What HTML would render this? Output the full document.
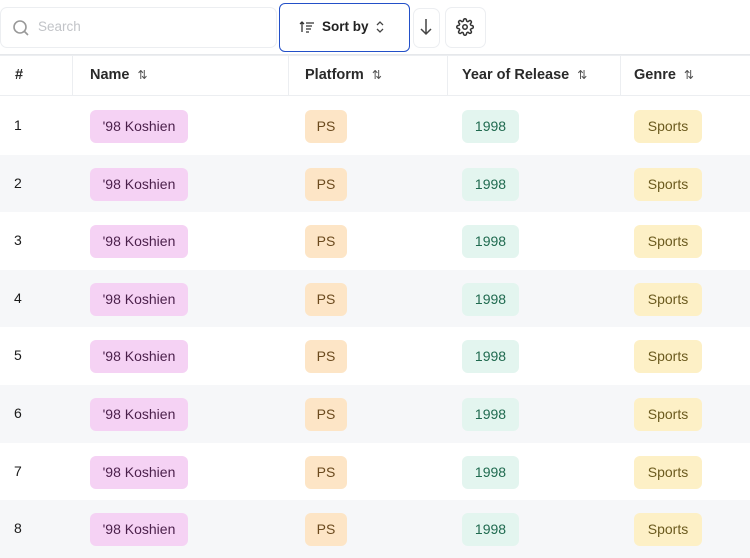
<!DOCTYPE html><html><head><style>
body{margin:0;width:750px;height:558px;overflow:hidden;background:#fff;font-family:"Liberation Sans",sans-serif;color:#1a1a1a;position:relative}
.abs{position:absolute}
.box{position:absolute;border:1px solid #eceef1;border-radius:7px;background:#fff;box-sizing:border-box}
.hdr{position:absolute;top:55px;height:41px;left:0;width:750px;border-bottom:1px solid #eceef1;border-top:1px solid #eceef1;box-sizing:border-box}
.hc{position:absolute;top:0;height:40px;line-height:38px;font-size:14.5px;font-weight:bold;color:#2a2a2a}
.sep{position:absolute;top:0;height:40px;width:1px;background:#eceef1}
.row{position:absolute;left:0;width:750px;height:57.6px}
.row.g{background:#f6f7f9}
.num{position:absolute;left:14px;top:20px;font-size:14px}
.pill{position:absolute;top:13px;height:33px;line-height:33px;border-radius:6px;font-size:14px;text-align:center}
.n{left:90px;width:98px;background:#f5d2f4;color:#4a1f4a}
.p{left:305px;width:42px;background:#fde5c6;color:#6b4a1e}
.y{left:462px;width:57px;background:#e3f5ef;color:#1f6a4f}
.s{left:634px;width:68px;background:#fdf0c6;color:#6b5a1e}
.si{font-weight:normal;color:#555;font-size:12px;margin-left:8px}
</style></head><body>
<div class="abs" style="left:0;top:54px;width:750px;height:1px;background:#e6e8eb"></div>
<div class="box" style="left:0;top:7px;width:277px;height:41px"></div>
<svg class="abs" style="left:12px;top:19px" width="18" height="18" viewBox="0 0 18 18"><circle cx="8" cy="8" r="6" fill="none" stroke="#999" stroke-width="1.6"/><path d="M12.5 12.5L16 16" stroke="#999" stroke-width="1.6"/></svg>
<div class="abs" style="left:38px;top:19px;font-size:13.5px;color:#c2c4c8">Search</div>
<div class="abs" style="left:279px;top:3px;width:131px;height:49px;border:1.5px solid #2350c8;border-radius:6px;box-sizing:border-box"></div>
<svg class="abs" style="left:299px;top:20px" width="16" height="14" viewBox="0 0 16 14"><path d="M3 12V2M1 4l2-2 2 2M7 3h8M7 6h6M7 9h5M7 12h3" stroke="#333" stroke-width="1.3" fill="none"/></svg>
<div class="abs" style="left:322px;top:19px;font-size:13.5px;font-weight:bold;color:#222">Sort by</div>
<svg class="abs" style="left:375px;top:20px" width="10" height="14" viewBox="0 0 10 14"><path d="M2 5l3-3 3 3M2 9l3 3 3-3" stroke="#444" stroke-width="1.3" fill="none"/></svg>
<div class="box" style="left:413px;top:8px;width:27px;height:40px"></div>
<svg class="abs" style="left:419px;top:17px" width="14" height="20" viewBox="0 0 14 20"><path d="M7 2v15M2 12l5 5 5-5" stroke="#444" stroke-width="1.5" fill="none"/></svg>
<div class="box" style="left:445px;top:7px;width:41px;height:41px"></div>
<svg class="abs" style="left:456px;top:18px" width="18" height="18" viewBox="0 0 24 24"><circle cx="12" cy="12" r="3" fill="none" stroke="#333" stroke-width="2"/><path d="M19.4 15a1.7 1.7 0 0 0 .3 1.8l.1.1a2 2 0 1 1-2.8 2.8l-.1-.1a1.7 1.7 0 0 0-2.9 1.2V21a2 2 0 0 1-4 0v-.1a1.7 1.7 0 0 0-2.9-1.2l-.1.1a2 2 0 1 1-2.8-2.8l.1-.1A1.7 1.7 0 0 0 3 14H3a2 2 0 0 1 0-4h.1a1.7 1.7 0 0 0 1.2-2.9l-.1-.1a2 2 0 1 1 2.8-2.8l.1.1A1.7 1.7 0 0 0 10 3V3a2 2 0 0 1 4 0v.1a1.7 1.7 0 0 0 2.9 1.2l.1-.1a2 2 0 1 1 2.8 2.8l-.1.1A1.7 1.7 0 0 0 21 10h.1a2 2 0 0 1 0 4z" fill="none" stroke="#333" stroke-width="2"/></svg>
<div class="hdr">
<div class="hc" style="left:15px">#</div>
<div class="sep" style="left:72px"></div>
<div class="hc" style="left:90px">Name<span class="si">⇅</span></div>
<div class="sep" style="left:288px"></div>
<div class="hc" style="left:305px">Platform<span class="si">⇅</span></div>
<div class="sep" style="left:447px"></div>
<div class="hc" style="left:462px">Year of Release<span class="si">⇅</span></div>
<div class="sep" style="left:620px"></div>
<div class="hc" style="left:634px">Genre<span class="si">⇅</span></div>
</div>
<div class="row" style="top:97px"><div class="num">1</div><div class="pill n">'98 Koshien</div><div class="pill p">PS</div><div class="pill y">1998</div><div class="pill s">Sports</div></div>
<div class="row g" style="top:154.6px"><div class="num">2</div><div class="pill n">'98 Koshien</div><div class="pill p">PS</div><div class="pill y">1998</div><div class="pill s">Sports</div></div>
<div class="row" style="top:212.2px"><div class="num">3</div><div class="pill n">'98 Koshien</div><div class="pill p">PS</div><div class="pill y">1998</div><div class="pill s">Sports</div></div>
<div class="row g" style="top:269.8px"><div class="num">4</div><div class="pill n">'98 Koshien</div><div class="pill p">PS</div><div class="pill y">1998</div><div class="pill s">Sports</div></div>
<div class="row" style="top:327.4px"><div class="num">5</div><div class="pill n">'98 Koshien</div><div class="pill p">PS</div><div class="pill y">1998</div><div class="pill s">Sports</div></div>
<div class="row g" style="top:385px"><div class="num">6</div><div class="pill n">'98 Koshien</div><div class="pill p">PS</div><div class="pill y">1998</div><div class="pill s">Sports</div></div>
<div class="row" style="top:442.6px"><div class="num">7</div><div class="pill n">'98 Koshien</div><div class="pill p">PS</div><div class="pill y">1998</div><div class="pill s">Sports</div></div>
<div class="row g" style="top:500.2px"><div class="num">8</div><div class="pill n">'98 Koshien</div><div class="pill p">PS</div><div class="pill y">1998</div><div class="pill s">Sports</div></div>
</body></html>
